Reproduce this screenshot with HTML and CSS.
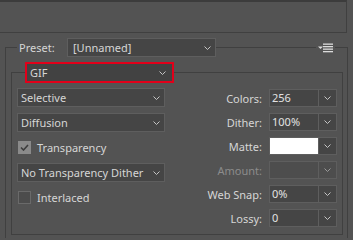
FILE: index.html
```html
<!DOCTYPE html>
<html>
<head>
<meta charset="utf-8">
<link rel="stylesheet" href="styles.css">
</head>
<body>
<div class="panel">
  <div class="topbox"></div>
  <div class="group outer">
    <div class="ghead">
      <span class="legend">Preset:</span>
      <div class="select preset"><span class="txt">[Unnamed]</span><svg class="chev" width="7" height="4" viewBox="0 0 7 4"><polyline points="0.5,0.5 3.5,3.5 6.5,0.5"/></svg></div>
      <span class="menu-btn"><svg width="15" height="10" viewBox="0 0 15 10"><path class="tri" d="M0 3.5h5l-2.5 2.5z"/><rect class="bar" x="5" y="0.5" width="10" height="1.3"/><rect class="bar" x="5" y="3" width="10" height="1.3"/><rect class="bar" x="5" y="5.5" width="10" height="1.3"/><rect class="bar" x="5" y="8" width="10" height="1.3"/></svg></span>
    </div>
    <div class="group inner">
      <div class="ghead">
        <div class="select format"><span class="txt">GIF</span><svg class="chev" width="7" height="4" viewBox="0 0 7 4"><polyline points="0.5,0.5 3.5,3.5 6.5,0.5"/></svg></div>
      </div>
      <div class="cols">
        <div class="left">
          <div class="select"><span class="txt">Selective</span><svg class="chev" width="7" height="4" viewBox="0 0 7 4"><polyline points="0.5,0.5 3.5,3.5 6.5,0.5"/></svg></div>
          <div class="select"><span class="txt">Diffusion</span><svg class="chev" width="7" height="4" viewBox="0 0 7 4"><polyline points="0.5,0.5 3.5,3.5 6.5,0.5"/></svg></div>
          <label class="check"><span class="box on"><svg width="9" height="7" viewBox="0 0 9 7"><polyline points="1,3.5 3.5,6 8,1"/></svg></span><span>Transparency</span></label>
          <div class="select"><span class="txt">No Transparency Dither</span><svg class="chev" width="7" height="4" viewBox="0 0 7 4"><polyline points="0.5,0.5 3.5,3.5 6.5,0.5"/></svg></div>
          <label class="check"><span class="box"></span><span>Interlaced</span></label>
        </div>
        <div class="right">
          <span class="lbl">Colors:</span>
          <div class="num"><span class="val">256</span><span class="arr"><svg class="chev" width="7" height="4" viewBox="0 0 7 4"><polyline points="0.5,0.5 3.5,3.5 6.5,0.5"/></svg></span></div>
          <span class="lbl">Dither:</span>
          <div class="num"><span class="val">100%</span><span class="arr"><svg class="chev" width="7" height="4" viewBox="0 0 7 4"><polyline points="0.5,0.5 3.5,3.5 6.5,0.5"/></svg></span></div>
          <span class="lbl">Matte:</span>
          <div class="num"><span class="val white"></span><span class="arr"><svg class="chev" width="7" height="4" viewBox="0 0 7 4"><polyline points="0.5,0.5 3.5,3.5 6.5,0.5"/></svg></span></div>
          <span class="lbl dis">Amount:</span>
          <div class="num dis"><span class="val"></span><span class="arr"><svg class="chev" width="7" height="4" viewBox="0 0 7 4"><polyline points="0.5,0.5 3.5,3.5 6.5,0.5"/></svg></span></div>
          <span class="lbl">Web Snap:</span>
          <div class="num"><span class="val">0%</span><span class="arr"><svg class="chev" width="7" height="4" viewBox="0 0 7 4"><polyline points="0.5,0.5 3.5,3.5 6.5,0.5"/></svg></span></div>
          <span class="lbl">Lossy:</span>
          <div class="num"><span class="val">0</span><span class="arr"><svg class="chev" width="7" height="4" viewBox="0 0 7 4"><polyline points="0.5,0.5 3.5,3.5 6.5,0.5"/></svg></span></div>
        </div>
      </div>
    </div>
  </div>
</div>
</body>
</html>
```

FILE: styles.css
```css
html, body {
  margin: 0;
  padding: 0;
  background: #535353;
  overflow: hidden;
}
body {
  width: 353px;
  height: 238px;
  font-family: "Noto Sans", "Open Sans", sans-serif;
  font-size: 11px;
  color: #d6d6d6;
}
.panel {
  width: 353px;
  height: 238px;
  overflow: hidden;
}
.topbox {
  box-sizing: border-box;
  width: 347px;
  height: 33px;
  border-top: 2px solid #3c3c3c;
  border-bottom: 1px solid #404040;
  border-right: 1px solid #404040;
}
.group {
  box-sizing: border-box;
  border: 1px solid #404040;
}
.outer {
  margin: 14px 0 0 5px;
  width: 343px;
  height: 220px;
  border-bottom: none;
}
.ghead {
  display: flex;
  align-items: center;
}
.outer > .ghead {
  margin-top: -10px;
  height: 19px;
}
.legend {
  box-sizing: border-box;
  width: 50px;
  margin-left: 11px;
  padding-left: 2px;
  background: #535353;
  line-height: 19px;
}
.select {
  box-sizing: border-box;
  display: flex;
  align-items: center;
  justify-content: space-between;
  height: 19px;
  padding: 0 4px 0 3px;
  background: #454545;
  border: 1px solid #5e5e5e;
  white-space: nowrap;
}
.preset {
  width: 149px;
  padding-left: 5px;
}
.chev polyline {
  fill: none;
  stroke: #c4c4c4;
  stroke-width: 1;
}
.menu-btn {
  display: flex;
  align-items: center;
  justify-content: center;
  margin-left: auto;
  margin-right: 12px;
  width: 19px;
  height: 12px;
  background: #535353;
}
.menu-btn .tri {
  fill: #dcdcdc;
}
.menu-btn .bar {
  fill: #dcdcdc;
}
.inner {
  margin: 15px 0 0 5px;
  width: 332px;
  height: 163px;
}
.inner > .ghead {
  margin-top: -11px;
  height: 21px;
}
.format {
  width: 149px;
  height: 21px;
  margin-left: 13px;
  border: 2px solid #e2001a;
  padding: 0 6px 0 3px;
  background: #424242;
}
.cols {
  display: flex;
  justify-content: space-between;
  margin-top: 5px;
  padding: 0 5px;
}
.left {
  display: flex;
  flex-direction: column;
  gap: 6px;
  width: 148px;
}
.left .select {
  width: 148px;
}
.check {
  display: flex;
  align-items: center;
  height: 19px;
  gap: 6px;
  padding-left: 1px;
}
.box {
  box-sizing: border-box;
  display: flex;
  align-items: center;
  justify-content: center;
  width: 13px;
  height: 13px;
  border: 1px solid #6a6a6a;
  background: #4c4c4c;
}
.box.on {
  background: #8a8a8a;
  border-color: #8a8a8a;
}
.box svg polyline {
  fill: none;
  stroke: #3c3c3c;
  stroke-width: 1.6;
}
.right {
  display: grid;
  grid-template-columns: auto 68px;
  column-gap: 7px;
  row-gap: 6px;
  align-items: center;
  margin-top: 1px;
  align-self: flex-start;
}
.lbl {
  text-align: right;
}
.lbl.dis {
  color: #8c8c8c;
}
.num {
  display: flex;
  height: 18px;
}
.num .val {
  box-sizing: border-box;
  flex: 1;
  height: 18px;
  line-height: 16px;
  padding-left: 2px;
  background: #454545;
  border: 1px solid #5e5e5e;
  color: #e2e2e2;
}
.num .val.white {
  background: #ffffff;
  border-color: #5e5e5e;
}
.num .arr {
  box-sizing: border-box;
  display: flex;
  align-items: center;
  justify-content: center;
  width: 18px;
  height: 18px;
  background: #454545;
  border: 1px solid #5e5e5e;
  border-left: none;
}
.num.dis .val {
  background: #4d4d4d;
}
.num.dis .arr {
  background: #4d4d4d;
}
.num.dis .chev polyline {
  stroke: #9a9a9a;
}
```
